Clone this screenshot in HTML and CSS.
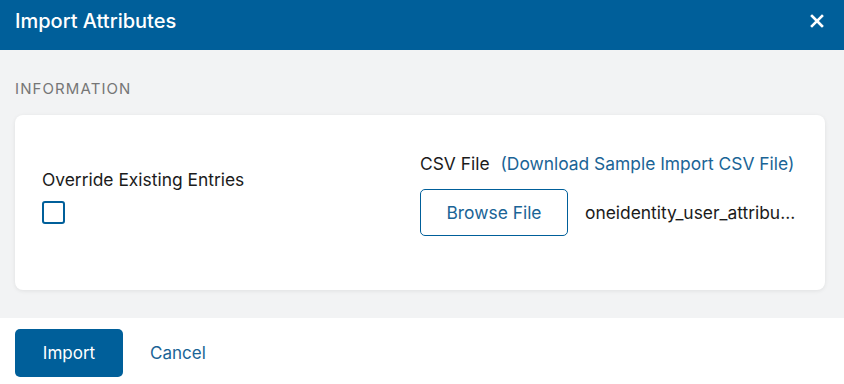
FILE: index.html
```html
<!DOCTYPE html>
<html lang="en">
    <head>
        <meta charset="UTF-8" />
        <meta name="viewport" content="width=device-width, initial-scale=1.0" />
        <title>Import Attributes</title>
        <link rel="stylesheet" href="styles.css">
    </head>
    <body>
        <div class="dialog">
            <div class="dialog-header">
                <h1 class="title">Import Attributes</h1>
                <a class="close" href="javascript:;">
                    <svg width="14" height="14" viewBox="0 0 14 14">
                        <path d="M2 2 L12 12 M12 2 L2 12" stroke="#fff" stroke-width="2.6" stroke-linecap="square" />
                    </svg>
                </a>
            </div>

            <div class="dialog-body">
                <div class="section-title">INFORMATION</div>
                <div class="card">
                    <div class="field field-check">
                        <label class="field-label" for="override">Override Existing Entries</label>
                        <span class="checkbox" id="override"></span>
                    </div>
                    <div class="field">
                        <div class="field-label">CSV File <a class="link" href="javascript:;">(Download Sample Import CSV File)</a></div>
                        <div class="file-row">
                            <a class="btn-outline" href="javascript:;">Browse File</a>
                            <span class="file-name">oneidentity_user_attributes_import.csv</span>
                        </div>
                    </div>
                </div>
            </div>

            <div class="dialog-footer">
                <a class="btn-primary" href="javascript:;">Import</a>
                <a class="btn-link" href="javascript:;">Cancel</a>
            </div>
        </div>
    </body>
</html>
```

FILE: styles.css
```css
* {
    margin: 0;
    padding: 0;
    box-sizing: border-box;
}

body {
    font-family: Inter, "Noto Sans", sans-serif;
    color: #1b1b1b;
    background-color: #fff;
}

a {
    text-decoration: none;
}

.dialog {
    width: 844px;
    height: 384px;
    display: flex;
    flex-direction: column;
}

/* 标题栏 */
.dialog-header {
    height: 50px;
    background-color: #005f9a;
    display: flex;
    align-items: center;
    justify-content: space-between;
    padding: 0 20px 0 15px;
}

.title {
    font-size: 20px;
    font-weight: 500;
    color: #fff;
    margin-top: -9px;
}

.close {
    display: flex;
    margin-top: -9px;
}

/* 内容区 */
.dialog-body {
    height: 268px;
    background-color: #f2f3f4;
    padding: 30px 19px 0 15px;
}

.section-title {
    font-size: 15px;
    letter-spacing: 1.1px;
    color: #767676;
    line-height: 18px;
}

.card {
    margin-top: 17px;
    height: 175px;
    background-color: #fff;
    border-radius: 8px;
    box-shadow: 0 1px 4px rgba(0, 0, 0, 0.08);
    padding: 38px 27px 0;
    display: grid;
    grid-template-columns: 378px 378px;
    align-items: start;
}

.field-label {
    display: block;
    font-size: 17.4px;
    line-height: 22px;
}

.field-check {
    padding-top: 16px;
}

.link {
    color: #1a6496;
    margin-left: 6px;
}

.checkbox {
    display: block;
    width: 23px;
    height: 23px;
    margin-top: 10px;
    border: 2px solid #005f9a;
    border-radius: 3px;
}

.file-row {
    margin-top: 14px;
    display: flex;
    align-items: center;
}

.btn-outline {
    width: 148px;
    height: 47px;
    border: 1px solid #005f9a;
    border-radius: 5px;
    color: #1a6496;
    font-size: 17.4px;
    display: flex;
    align-items: center;
    justify-content: center;
}

.file-name {
    margin-left: 17px;
    font-size: 17.4px;
    width: 213px;
    white-space: nowrap;
    overflow: hidden;
    text-overflow: ellipsis;
}

/* 底部按钮 */
.dialog-footer {
    flex: 1;
    padding: 11px 15px 0;
    display: flex;
    align-items: flex-start;
}

.btn-primary {
    width: 108px;
    height: 48px;
    background-color: #005f9a;
    border-radius: 5px;
    color: #fff;
    font-size: 17px;
    display: flex;
    align-items: center;
    justify-content: center;
}

.btn-link {
    margin-left: 27px;
    height: 48px;
    display: flex;
    align-items: center;
    color: #1a6496;
    font-size: 17px;
}
```
